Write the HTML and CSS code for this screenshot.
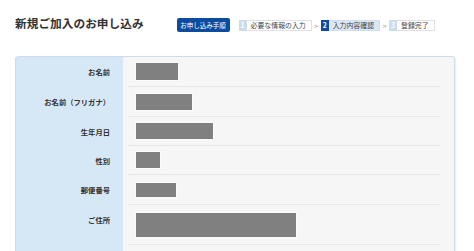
FILE: index.html
```html
<!DOCTYPE html>
<html lang="ja">
<head>
<meta charset="utf-8">
<title>新規ご加入のお申し込み</title>
<link rel="stylesheet" href="styles.css">
</head>
<body>
<header class="head">
  <h1 class="title">新規ご加入のお申し込み</h1>
  <span class="badge">お申し込み手順</span>
  <ol class="steps">
    <li class="step"><span class="num">1</span><span class="lbl">必要な情報の入力</span></li>
    <li class="arrow">&gt;</li>
    <li class="step current"><span class="num">2</span><span class="lbl">入力内容確認</span></li>
    <li class="arrow">&gt;</li>
    <li class="step"><span class="num">3</span><span class="lbl">登録完了</span></li>
  </ol>
</header>
<section class="panel">
  <div class="label">お名前</div>
  <div class="value"><span class="bar" style="width:42px;height:17px"></span></div>
  <div class="label">お名前（フリガナ）</div>
  <div class="value"><span class="bar" style="width:56px;height:16px"></span></div>
  <div class="label">生年月日</div>
  <div class="value"><span class="bar" style="width:77px;height:16px"></span></div>
  <div class="label">性別</div>
  <div class="value"><span class="bar" style="width:24px;height:16px"></span></div>
  <div class="label">郵便番号</div>
  <div class="value"><span class="bar" style="width:40px;height:14px"></span></div>
  <div class="label top">ご住所</div>
  <div class="value"><span class="bar" style="width:160px;height:24px"></span></div>
</section>
</body>
</html>
```
FILE: styles.css
```css
html, body {
  overflow: hidden;
}
body {
  margin: 0;
  background: #fff;
  color: #333;
  font-family: "Noto Sans CJK JP", "Noto Sans", sans-serif;
}
.head {
  display: flex;
  align-items: center;
  height: 14px;
  padding: 18px 0 0 15px;
}
.title {
  margin: 0;
  font-size: 11.7px;
  line-height: 14px;
  font-weight: 700;
  color: #333;
  position: relative;
  top: -2px;
}
.badge {
  margin-left: 33px;
  width: 53px;
  height: 14px;
  border-radius: 2px;
  background: #0b4c9f;
  color: #fff;
  font-size: 6.5px;
  line-height: 14px;
  text-align: center;
  white-space: nowrap;
}
.steps {
  display: flex;
  align-items: center;
  margin: 0 0 0 9px;
  padding: 0;
  list-style: none;
  height: 14px;
}
.step {
  display: flex;
  height: 11px;
  box-sizing: border-box;
  border: 1px solid #e0e0e0;
  background: #fff;
  font-size: 6.9px;
  line-height: 9px;
  white-space: nowrap;
}
.step .num {
  width: 8px;
  margin: -1px 0 -1px -1px;
  background: #c9dcf0;
  color: #fff;
  font-weight: 700;
  text-align: center;
  line-height: 11px;
}
.step .lbl {
  padding: 0 5px 0 4px;
  color: #444;
}
.step.current {
  background: #dbe7f3;
  border-color: #d0dfee;
}
.step.current .num {
  background: #0b4c9f;
}
.arrow {
  width: 9px;
  text-align: center;
  font-size: 7.5px;
  line-height: 11px;
  color: #999;
}
.panel {
  margin: 24px 0 0 15px;
  width: 440px;
  box-sizing: border-box;
  padding-bottom: 30px;
  border: 1px solid #cfdce7;
  border-radius: 3px;
  background: linear-gradient(to right, #d6e7f6 107px, #f6f6f6 107px);
  box-shadow: 1px 1px 2px rgba(0, 0, 0, 0.08);
  display: grid;
  grid-template-columns: 107px 1fr;
  grid-template-rows: 30px 30px 29px 29px 30px 40px;
}
.label {
  display: flex;
  align-items: center;
  justify-content: flex-end;
  padding-right: 13px;
  font-size: 7.3px;
  font-weight: 700;
  color: #333;
  white-space: nowrap;
}
.label.top {
  align-items: flex-start;
  padding-top: 10px;
}
.value {
  display: flex;
  align-items: center;
  margin: 0 14px 0 5px;
  padding-left: 8px;
  border-bottom: 1px solid #e9e9e9;
}
.bar {
  display: block;
  background: #808080;
  box-shadow: 0 0 0 1px #fbfbfb;
}
```
